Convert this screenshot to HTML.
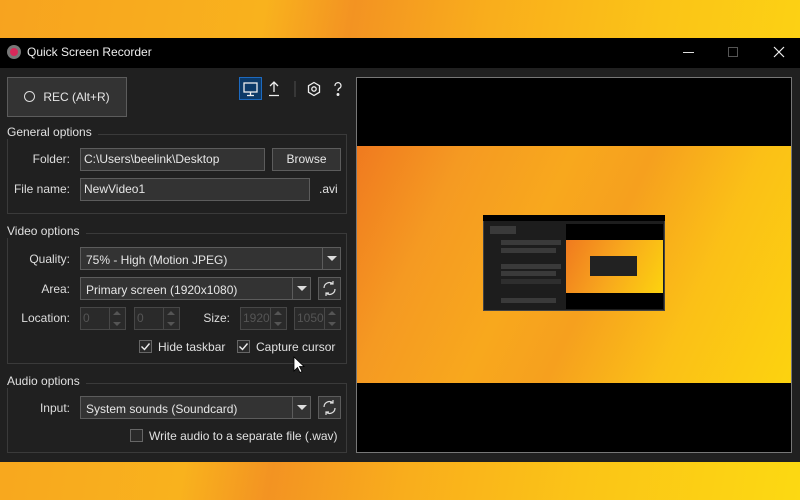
<!DOCTYPE html>
<html><head><meta charset="utf-8"><style>
*{box-sizing:border-box;margin:0;padding:0}
body{width:800px;height:500px;overflow:hidden;position:relative;font-family:"Liberation Sans",sans-serif;font-size:12px;color:#e0e0e0;
background:linear-gradient(100deg,#f7a31f 0%,#f9b21d 30%,#f39322 40%,#f9ad1c 55%,#fbc417 75%,#fcd912 100%)}
.a{position:absolute}
.win{left:0;top:38px;width:800px;height:424px;background:#202020}
.title{left:0;top:38px;width:800px;height:30px;background:#000}
.lbl{position:absolute;text-align:right;color:#ddd;font-size:12px}
.inp{position:absolute;background:#333;border:1px solid #5c5c5c;color:#e6e6e6;padding:2px 0 0 3px;font-size:12px;height:23px;line-height:16px}
.btn{position:absolute;background:#333;border:1px solid #5c5c5c;text-align:center;color:#e6e6e6}
.grp{position:absolute;border:1px solid #3a3a3a}
.gt{position:absolute;background:#202020;padding-right:6px;font-size:12px;color:#e0e0e0}
.dd{position:absolute;top:0;bottom:0;right:0;width:18px;border-left:1px solid #5c5c5c}
.dd:after{content:"";position:absolute;left:4px;top:8px;border-left:5px solid transparent;border-right:5px solid transparent;border-top:5px solid #ddd}
.spin{position:absolute;background:#2a2a2a;border:1px solid #474747;color:#555;height:23px;padding:3px 0 0 2px}
.spin i{position:absolute;right:0;top:0;bottom:0;width:16px;border-left:1px solid #474747}
.spin i:before{content:"";position:absolute;left:3px;top:3px;border-left:4px solid transparent;border-right:4px solid transparent;border-bottom:4px solid #555}
.spin i:after{content:"";position:absolute;left:3px;bottom:3px;border-left:4px solid transparent;border-right:4px solid transparent;border-top:4px solid #555}
.cb{position:absolute;width:13px;height:13px;border:1px solid #666;background:#2a2a2a}
</style></head><body>
<div class="a win"></div>
<div class="a title"></div>
<div class="a" style="left:7px;top:45px;width:14px;height:14px;border-radius:50%;background:#777"><div style="margin:3px;width:8px;height:8px;border-radius:50%;background:#d8285a"></div></div>
<div class="a" style="left:27px;top:45px;font-size:12px;color:#eee">Quick Screen Recorder</div>
<div class="a" style="left:683px;top:52px;width:11px;height:1px;background:#ddd"></div>
<div class="a" style="left:728px;top:47px;width:10px;height:10px;border:1px solid #555"></div>
<svg class="a" style="left:773px;top:46px" width="12" height="12"><path d="M1 1L11 11M11 1L1 11" stroke="#eee" stroke-width="1.2"/></svg>

<div class="btn" style="left:7px;top:77px;width:120px;height:40px;line-height:38px;font-size:12px"><span style="display:inline-block;width:11px;height:11px;border:1px solid #ddd;border-radius:50%;vertical-align:-1px;margin-right:8px"></span>REC (Alt+R)</div>

<div class="a" style="left:239px;top:77px;width:23px;height:23px;background:#0d3a68;border:1px solid #1d6ac0"></div>
<svg class="a" style="left:239px;top:77px" width="110" height="24" fill="none" stroke="#eee" stroke-width="1.3">
<rect x="5" y="6" width="13" height="9"/><path d="M11.5 15v3M8 18.5h7"/>
<path d="M35 5v10M31 9l4-4 4 4M30 18.5h10"/>
<path d="M56 4v16" stroke="#444"/>
<circle cx="75" cy="12" r="2.2"/><path d="M75 5.5l5.5 3.2v6.5L75 18.5l-5.5-3.3V8.7z"/>
<path d="M96 9a3 3 0 1 1 4 2.5c-1 .6-1 1.2-1 2.5" /><circle cx="99" cy="17.5" r=".8" fill="#eee"/>
</svg>

<div class="grp" style="left:7px;top:134px;width:340px;height:80px"></div>
<div class="gt" style="left:7px;top:125px">General options</div>
<div class="lbl" style="left:0;width:70px;top:152px">Folder:</div>
<div class="inp" style="left:80px;top:148px;width:185px">C:\Users\beelink\Desktop</div>
<div class="btn" style="left:272px;top:148px;width:69px;height:23px;line-height:21px">Browse</div>
<div class="lbl" style="left:0;width:70px;top:182px">File name:</div>
<div class="inp" style="left:80px;top:178px;width:230px">NewVideo1</div>
<div class="a" style="left:319px;top:182px">.avi</div>

<div class="grp" style="left:7px;top:233px;width:340px;height:131px"></div>
<div class="gt" style="left:7px;top:224px">Video options</div>
<div class="lbl" style="left:0;width:70px;top:252px">Quality:</div>
<div class="inp" style="left:80px;top:247px;width:261px;padding:4px 0 0 5px">75% - High (Motion JPEG)<div class="dd"></div></div>
<div class="lbl" style="left:0;width:70px;top:282px">Area:</div>
<div class="inp" style="left:80px;top:277px;width:231px;padding:4px 0 0 5px">Primary screen (1920x1080)<div class="dd"></div></div>
<div class="btn" style="left:318px;top:277px;width:23px;height:23px"></div>
<div class="lbl" style="left:0;width:70px;top:311px">Location:</div>
<div class="spin" style="left:80px;top:307px;width:46px">0<i></i></div>
<div class="spin" style="left:134px;top:307px;width:46px">0<i></i></div>
<div class="lbl" style="left:190px;width:40px;top:311px">Size:</div>
<div class="spin" style="left:240px;top:307px;width:47px">1920<i></i></div>
<div class="spin" style="left:294px;top:307px;width:47px">1050<i></i></div>
<div class="cb" style="left:139px;top:340px"></div><svg class="a" style="left:139px;top:340px" width="13" height="13"><path d="M2.5 6.5l3 3 5-6" stroke="#eee" stroke-width="1.4" fill="none"/></svg>
<div class="a" style="left:158px;top:340px">Hide taskbar</div>
<div class="cb" style="left:237px;top:340px"></div><svg class="a" style="left:237px;top:340px" width="13" height="13"><path d="M2.5 6.5l3 3 5-6" stroke="#eee" stroke-width="1.4" fill="none"/></svg>
<div class="a" style="left:256px;top:340px">Capture cursor</div>
<svg class="a" style="left:293px;top:356px" width="12" height="18"><path d="M1 1v14l3.5-3.5 2.5 5 2-1-2.5-5H11z" fill="#fff" stroke="#000" stroke-width=".8"/></svg>

<div class="grp" style="left:7px;top:383px;width:340px;height:70px"></div>
<div class="gt" style="left:7px;top:374px">Audio options</div>
<div class="lbl" style="left:0;width:70px;top:401px">Input:</div>
<div class="inp" style="left:80px;top:396px;width:231px;padding:4px 0 0 5px">System sounds (Soundcard)<div class="dd"></div></div>
<div class="btn" style="left:318px;top:396px;width:23px;height:23px"></div>
<svg class="a" style="left:318px;top:277px" width="23" height="23" fill="none" stroke="#ddd" stroke-width="1.2"><path d="M6 11a5.5 5.5 0 0 1 9-4.2M17 12a5.5 5.5 0 0 1-9 4.2M15 4v3h-3M8 19v-3h3"/></svg>
<svg class="a" style="left:318px;top:396px" width="23" height="23" fill="none" stroke="#ddd" stroke-width="1.2"><path d="M6 11a5.5 5.5 0 0 1 9-4.2M17 12a5.5 5.5 0 0 1-9 4.2M15 4v3h-3M8 19v-3h3"/></svg>
<div class="cb" style="left:130px;top:429px"></div>
<div class="a" style="left:149px;top:429px">Write audio to a separate file (.wav)</div>

<div class="a" style="left:356px;top:77px;width:436px;height:376px;background:#000;border:1px solid #777"></div>
<div class="a" style="left:357px;top:146px;width:434px;height:237px;background:linear-gradient(115deg,#f07a1f 0%,#f59a22 20%,#f8a81d 40%,#f6a01e 55%,#fbc017 75%,#fcd30f 100%)"></div>
<div class="a" style="left:483px;top:215px;width:182px;height:96px;background:#1d1d1d;border:1px solid #444"></div>
<div class="a" style="left:483px;top:215px;width:182px;height:6px;background:#000"></div>
<div class="a" style="left:566px;top:224px;width:97px;height:85px;background:#000"></div>
<div class="a" style="left:566px;top:240px;width:97px;height:53px;background:linear-gradient(115deg,#f07a1f,#f8a81d 50%,#fcd30f)"></div>
<div class="a" style="left:590px;top:256px;width:47px;height:20px;background:#222"></div>
<div class="a" style="left:490px;top:226px;width:26px;height:8px;background:#3a3a3a"></div>
<div class="a" style="left:501px;top:240px;width:60px;height:5px;background:#3a3a3a"></div>
<div class="a" style="left:501px;top:248px;width:55px;height:5px;background:#3a3a3a"></div>
<div class="a" style="left:501px;top:264px;width:60px;height:5px;background:#3a3a3a"></div>
<div class="a" style="left:501px;top:271px;width:55px;height:5px;background:#3a3a3a"></div>
<div class="a" style="left:501px;top:279px;width:60px;height:5px;background:#2e2e2e"></div>
<div class="a" style="left:501px;top:298px;width:55px;height:5px;background:#3a3a3a"></div>
</body></html>
